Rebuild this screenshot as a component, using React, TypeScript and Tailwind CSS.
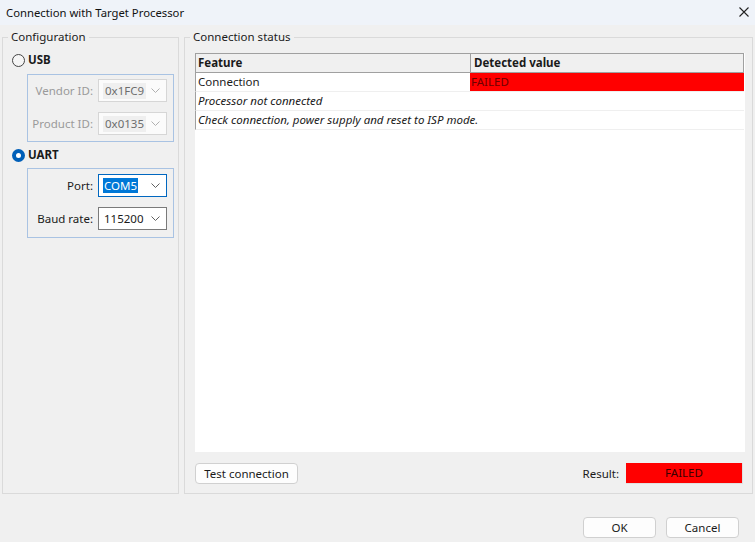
import React from "react";

const font = { fontFamily: '"Noto Sans", "Open Sans", sans-serif' };

function Chevron({ color = "#606060" }: { color?: string }) {
  return (
    <svg width="9" height="5" viewBox="0 0 9 5" className="shrink-0">
      <path d="M0.5 0.5 L4.5 4.5 L8.5 0.5" fill="none" stroke={color} strokeWidth="1" />
    </svg>
  );
}

function Radio({ checked }: { checked?: boolean }) {
  if (checked)
    return (
      <span className="flex h-[13px] w-[13px] items-center justify-center rounded-full bg-[#005fb8]">
        <span className="h-[5px] w-[5px] rounded-full bg-white" />
      </span>
    );
  return <span className="h-[13px] w-[13px] rounded-full border border-[#444] bg-[#f5f5f5]" />;
}

function Combo({
  value,
  disabled,
  focused,
}: {
  value: string;
  disabled?: boolean;
  focused?: boolean;
}) {
  const border = disabled
    ? "border-[#d6d6d6] bg-[#fbfbfb]"
    : focused
    ? "border-[#0067c0] bg-white"
    : "border-[#7a7a7a] bg-white";
  return (
    <div className={`flex h-[23px] w-[69px] shrink-0 items-center justify-between border pl-[4px] pr-[6px] ${border}`}>
      {disabled ? (
        <span className="bg-[#efefef] px-[2px] leading-[16px] text-[#6d6d6d]">{value}</span>
      ) : focused ? (
        <span className="bg-[#0078d7] px-[1px] leading-[15px] text-white">{value}</span>
      ) : (
        <span className="px-[1px] text-[#1a1a1a]">{value}</span>
      )}
      <Chevron color={disabled ? "#b0b0b0" : "#606060"} />
    </div>
  );
}

function Row({ label, children, disabled }: { label: string; children: React.ReactNode; disabled?: boolean }) {
  return (
    <div className="flex items-center justify-end gap-[5px]">
      <span className={disabled ? "text-[#9a9a9a]" : "text-[#1a1a1a]"}>{label}</span>
      {children}
    </div>
  );
}

export default function App() {
  return (
    <div className="h-[542px] w-[755px] overflow-hidden bg-[#f0f0f0] text-[11.5px] text-[#1a1a1a]" style={font}>
      {/* Title bar */}
      <div className="flex h-[25px] items-center justify-between bg-[#eff3f9] pl-[6px] pr-[6px]">
        <span className="text-[11.3px] leading-[16px] text-[#111]">Connection with Target Processor</span>
        <svg width="10" height="10" viewBox="0 0 10 10" className="mb-[2px]">
          <path d="M0.5 0.5 L9.5 9.5 M9.5 0.5 L0.5 9.5" stroke="#222" strokeWidth="1.1" />
        </svg>
      </div>

      {/* Body */}
      <div className="mt-[4px] flex gap-[5px] pl-[2px]">
        {/* Configuration */}
        <fieldset className="h-[465px] w-[177px] min-w-0 border border-[#dadada]">
          <legend className="ml-[5px] px-[3px] leading-[16px]">Configuration</legend>
          <div className="pl-[9px] pr-[4px] pt-[8px]">
            <div className="flex items-center gap-[3px]">
              <Radio />
              <span className="font-bold leading-[14px]">USB</span>
            </div>
            <div className="ml-[15px] mt-[7px] flex w-[147px] flex-col gap-[10px] border border-[#a9c3e3] pb-[6px] pr-[6px] pt-[4px]">
              <Row label="Vendor ID:" disabled>
                <Combo value="0x1FC9" disabled />
              </Row>
              <Row label="Product ID:" disabled>
                <Combo value="0x0135" disabled />
              </Row>
            </div>
            <div className="mt-[6px] flex items-center gap-[3px]">
              <Radio checked />
              <span className="font-bold leading-[14px]">UART</span>
            </div>
            <div className="ml-[15px] mt-[6px] flex w-[147px] flex-col gap-[10px] border border-[#a9c3e3] pb-[7px] pr-[6px] pt-[5px]">
              <Row label="Port:">
                <Combo value="COM5" focused />
              </Row>
              <Row label="Baud rate:">
                <Combo value="115200" />
              </Row>
            </div>
          </div>
        </fieldset>

        {/* Connection status */}
        <fieldset className="h-[465px] w-[569px] min-w-0 border border-[#dadada]">
          <legend className="ml-[5px] px-[3px] leading-[16px]">Connection status</legend>
          <div className="pl-[10px] pr-[7px]">
            <div className="mt-[8px] flex h-[399px] flex-col bg-white">
              <div className="grid h-[20px] w-[549px] grid-cols-[275px_272px] border border-[#a0a0a0] bg-[#f0f0f0] font-bold leading-[18px]">
                <div className="border-r border-[#a0a0a0] pl-[2px]">Feature</div>
                <div className="pl-[3px]">Detected value</div>
              </div>
              <div className="grid h-[19px] w-[549px] grid-cols-[274px_274px] border-b border-l border-b-[#efefef] border-l-[#a0a0a0] leading-[18px]">
                <div className="pl-[2px]">Connection</div>
                <div className="bg-[#ff0000] pl-[1px] text-[#6e0000]">FAILED</div>
              </div>
              <div className="h-[19px] w-[549px] border-b border-l border-b-[#efefef] border-l-[#a0a0a0] pl-[2px] italic leading-[18px]">
                Processor not connected
              </div>
              <div className="h-[19px] w-[549px] border-b border-l border-b-[#efefef] border-l-[#a0a0a0] pl-[2px] italic leading-[18px]">
                Check connection, power supply and reset to ISP mode.
              </div>
            </div>
            <div className="mt-[11px] flex items-center justify-between pr-[2px]">
              <button className="h-[21px] w-[103px] rounded-[4px] border border-[#d0d0d0] bg-[#fdfdfd] leading-[18px]">
                Test connection
              </button>
              <div className="flex items-center gap-[7px]">
                <span>Result:</span>
                <div className="flex h-[21px] w-[117px] items-center justify-center border-b border-r border-[#e0e0e0] bg-[#ff0000] text-[#3a0000]">
                  FAILED
                </div>
              </div>
            </div>
          </div>
        </fieldset>
      </div>

      {/* Bottom buttons */}
      <div className="mt-[23px] flex justify-end gap-[10px] pr-[16px]">
        <button className="h-[21px] w-[73px] rounded-[4px] border border-[#d0d0d0] bg-[#fdfdfd] leading-[18px]">OK</button>
        <button className="h-[21px] w-[73px] rounded-[4px] border border-[#d0d0d0] bg-[#fdfdfd] leading-[18px]">Cancel</button>
      </div>
    </div>
  );
}
